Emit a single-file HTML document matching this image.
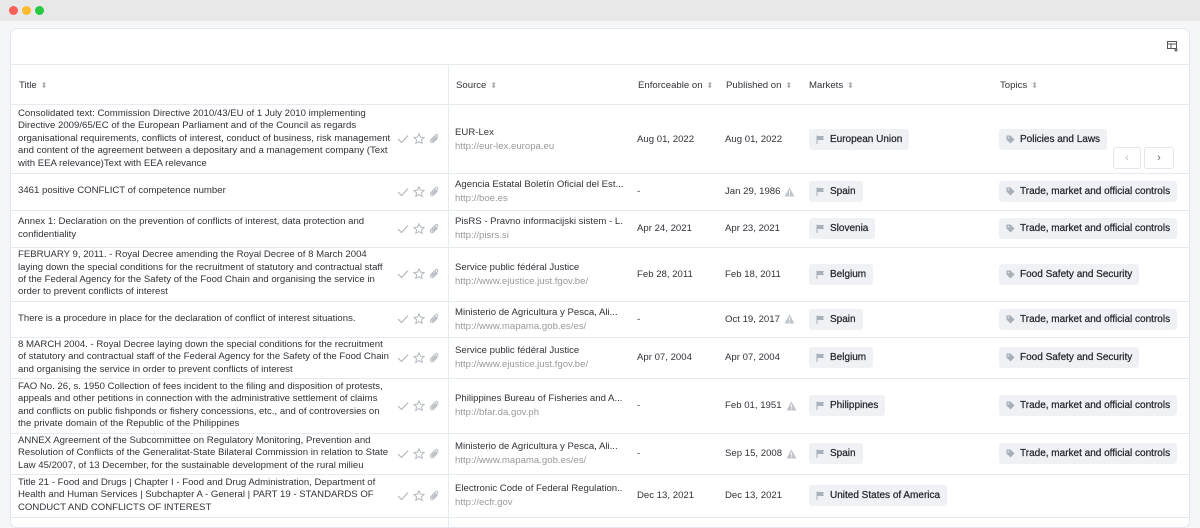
<!DOCTYPE html>
<html><head><meta charset="utf-8"><style>
*{margin:0;padding:0;box-sizing:border-box}
body{width:1200px;height:516px;overflow:hidden;background:#f5f6f8;font-family:"Liberation Sans",sans-serif;font-size:9.6px;color:#303338;position:relative}
.top{position:absolute;left:0;top:0;width:1200px;height:21px;background:#e8e8e8}
.dot{position:absolute;top:6px;width:9px;height:9px;border-radius:50%}
.card{position:absolute;left:10px;top:28px;width:1180px;height:500px;background:#fff;border:1px solid #e3e8f0;border-radius:6px;overflow:hidden}
.hline{position:absolute;left:0;width:1180px;height:1px;background:#e6ebf2}
.vline{position:absolute;left:437px;top:36px;width:1px;height:470px;background:#e6ebf2}
.c{position:absolute;display:flex;align-items:center}
.th{font-size:9.6px;color:#303338}
.sort{color:#a8acb3;font-size:8px;margin-left:4px}
.title{line-height:12.4px;width:374px}
.src .n{color:#303338;width:168px;white-space:nowrap;overflow:hidden}.src .u{color:#999;margin-top:3px}
.tag{background:#eff1f4;border-radius:3px;padding:5px 7px;color:#26292e;display:inline-flex;align-items:center;font-size:10px;white-space:nowrap;-webkit-text-stroke:0.25px #26292e}
.tag svg{margin-right:5px}
.ic{position:absolute;left:386px;display:flex;gap:4px;align-items:center}
.warn{display:inline-block;margin-left:4px}
</style></head><body>
<div class="top"><div class="dot" style="left:9px;background:#fe5f57"></div><div class="dot" style="left:22px;background:#febc2e"></div><div class="dot" style="left:35px;background:#28c840"></div></div>
<div class="card">
<svg style="position:absolute;left:1156px;top:12px" width="12" height="11" viewBox="0 0 12 11"><rect x="0.5" y="0.5" width="9" height="7" fill="none" stroke="#555" stroke-width="1"/><line x1="0.5" y1="3" x2="9.5" y2="3" stroke="#555"/><line x1="4" y1="3" x2="4" y2="8" stroke="#555"/><path d="M9 7v4M7 9h4" stroke="#555"/></svg>
<div class="hline" style="top:35px"></div>
<div class="hline" style="top:75px"></div>
<div class="vline"></div>
<div class="c th" style="left:8px;top:36px;height:40px">Title<span class="sort">⬍</span></div>
<div class="c th" style="left:445px;top:36px;height:40px">Source<span class="sort">⬍</span></div>
<div class="c th" style="left:627px;top:36px;height:40px">Enforceable on<span class="sort">⬍</span></div>
<div class="c th" style="left:715px;top:36px;height:40px">Published on<span class="sort">⬍</span></div>
<div class="c th" style="left:798px;top:36px;height:40px">Markets<span class="sort">⬍</span></div>
<div class="c th" style="left:989px;top:36px;height:40px">Topics<span class="sort">⬍</span></div>
<div id="rows"></div>
<div style="position:absolute;left:1102px;top:118px;width:28px;height:22px;border:1px solid #e3e6ea;border-radius:3px;color:#bbb;text-align:center;line-height:20px;font-size:11px;background:#fff">‹</div>
<div style="position:absolute;left:1133px;top:118px;width:30px;height:22px;border:1px solid #e3e6ea;border-radius:3px;color:#666;text-align:center;line-height:20px;font-size:11px;background:#fff">›</div>
</div>
<script>
const flag='<svg width="9" height="9" viewBox="0 0 9 9"><path d="M1 0.5v8.5" stroke="#aab0b8"/><path d="M1.5 1h6.5l-1 2 1 2h-6.5z" fill="#aab0b8"/></svg>';
const tagI='<svg width="9" height="9" viewBox="0 0 9 9"><path d="M0.5 0.5h4l4 4-4 4-4-4z" fill="#aab0b8"/><circle cx="2.5" cy="2.5" r="0.8" fill="#eff1f4"/></svg>';
const warn='<svg class="warn" width="11" height="10" viewBox="0 0 11 10"><path d="M5.5 0.5L10.5 9.5H0.5z" fill="#c0c5cc"/><path d="M5.5 3.5v3M5.5 7.5v1" stroke="#fff"/></svg>';
const icons='<svg width="12" height="10" viewBox="0 0 12 10"><path d="M1 5l3.5 3.5L11 1.5" fill="none" stroke="#b3b8bf" stroke-width="1.2"/></svg><svg width="12" height="12" viewBox="0 0 12 12"><path d="M6 0.8l1.5 3.3 3.6.4-2.7 2.4.8 3.5L6 8.6 2.8 10.4l.8-3.5L.9 4.5l3.6-.4z" fill="none" stroke="#b3b8bf"/></svg><svg width="11" height="12" viewBox="0 0 11 12"><path d="M8.5 5L4.5 9.2a1.8 1.8 0 01-2.6-2.6L6.6 1.8a1.2 1.2 0 011.8 1.8L4 8a.6.6 0 01-.9-.9L7 3.3" fill="none" stroke="#b3b8bf"/></svg>';
const R=[
[76,68,"Consolidated text: Commission Directive 2010/43/EU of 1 July 2010 implementing Directive 2009/65/EC of the European Parliament and of the Council as regards organisational requirements, conflicts of interest, conduct of business, risk management and content of the agreement between a depositary and a management company (Text with EEA relevance)Text with EEA relevance","EUR-Lex","http://eur-lex.europa.eu","Aug 01, 2022","Aug 01, 2022",0,"European Union","Policies and Laws"],
[144,37,"3461 positive CONFLICT of competence number","Agencia Estatal Boletín Oficial del Est...","http://boe.es","-","Jan 29, 1986",1,"Spain","Trade, market and official controls"],
[181,37,"Annex 1: Declaration on the prevention of conflicts of interest, data protection and confidentiality","PisRS - Pravno informacijski sistem - L...","http://pisrs.si","Apr 24, 2021","Apr 23, 2021",0,"Slovenia","Trade, market and official controls"],
[218,54,"FEBRUARY 9, 2011. - Royal Decree amending the Royal Decree of 8 March 2004 laying down the special conditions for the recruitment of statutory and contractual staff of the Federal Agency for the Safety of the Food Chain and organising the service in order to prevent conflicts of interest","Service public fédéral Justice","http://www.ejustice.just.fgov.be/","Feb 28, 2011","Feb 18, 2011",0,"Belgium","Food Safety and Security"],
[272,36,"There is a procedure in place for the declaration of conflict of interest situations.","Ministerio de Agricultura y Pesca, Ali...","http://www.mapama.gob.es/es/","-","Oct 19, 2017",1,"Spain","Trade, market and official controls"],
[308,41,"8 MARCH 2004. - Royal Decree laying down the special conditions for the recruitment of statutory and contractual staff of the Federal Agency for the Safety of the Food Chain and organising the service in order to prevent conflicts of interest","Service public fédéral Justice","http://www.ejustice.just.fgov.be/","Apr 07, 2004","Apr 07, 2004",0,"Belgium","Food Safety and Security"],
[349,55,"FAO No. 26, s. 1950 Collection of fees incident to the filing and disposition of protests, appeals and other petitions in connection with the administrative settlement of claims and conflicts on public fishponds or fishery concessions, etc., and of controversies on the private domain of the Republic of the Philippines","Philippines Bureau of Fisheries and A...","http://bfar.da.gov.ph","-","Feb 01, 1951",1,"Philippines","Trade, market and official controls"],
[404,41,"ANNEX Agreement of the Subcommittee on Regulatory Monitoring, Prevention and Resolution of Conflicts of the Generalitat-State Bilateral Commission in relation to State Law 45/2007, of 13 December, for the sustainable development of the rural milieu","Ministerio de Agricultura y Pesca, Ali...","http://www.mapama.gob.es/es/","-","Sep 15, 2008",1,"Spain","Trade, market and official controls"],
[445,43,"Title 21 - Food and Drugs | Chapter I - Food and Drug Administration, Department of Health and Human Services | Subchapter A - General | PART 19 - STANDARDS OF CONDUCT AND CONFLICTS OF INTEREST","Electronic Code of Federal Regulation...","http://ecfr.gov","Dec 13, 2021","Dec 13, 2021",0,"United States of America",""]
];
let h='';
R.forEach(r=>{const [t,ht,ti,sn,su,en,pu,w,m,tp]=r;const s=`top:${t}px;height:${ht}px`;
h+=`<div class="hline" style="top:${t+ht}px"></div>
<div class="c title" style="left:7px;${s}">${ti}</div>
<div class="ic" style="${s}">${icons}</div>
<div class="c src" style="left:444px;${s};flex-direction:column;align-items:flex-start;justify-content:center"><div class="n">${sn}</div><div class="u">${su}</div></div>
<div class="c" style="left:626px;${s}">${en}</div>
<div class="c" style="left:714px;${s}">${pu}${w?warn:''}</div>
<div class="c" style="left:798px;${s}"><span class="tag">${flag}${m}</span></div>
${tp?`<div class="c" style="left:988px;${s}"><span class="tag">${tagI}${tp}</span></div>`:''}`;});
document.getElementById('rows').innerHTML=h;
</script>
</body></html>
